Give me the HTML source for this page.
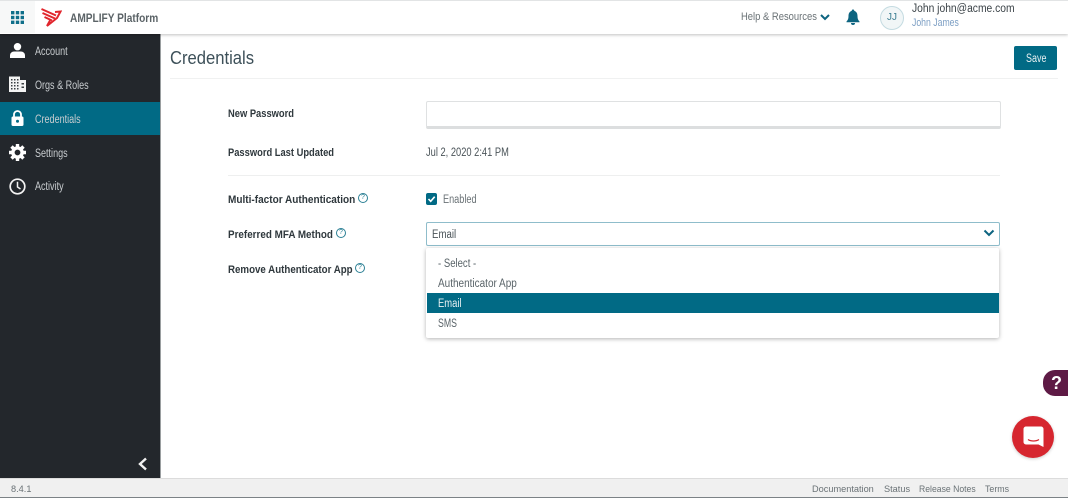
<!DOCTYPE html>
<html><head><meta charset="utf-8">
<style>
html,body{margin:0;padding:0;width:1068px;height:498px;overflow:hidden;background:#fff}
body{font-family:"Liberation Sans",sans-serif;position:relative;color:#3f4a50;filter:blur(.3px)}
.a{position:absolute;white-space:nowrap;line-height:1;transform-origin:0 50%}
.lbl{font-weight:bold;font-size:11px;color:#2f383d;left:228px}
.nav{left:35px;font-size:11.500px;color:#c9cdd0;transform:scaleX(.785)}
.q{position:absolute;width:8px;height:8px;border:1.100px solid #2c8095;border-radius:50%;font-size:7px;line-height:8px;text-align:center;color:#2c8095}
.opt{left:438px;font-size:11.500px;color:#5a6469}
.ft{top:485px;font-size:9.200px;color:#6a7276}
</style></head><body>
<!-- top bar -->
<div class="a" style="left:0;top:0;width:1068px;height:34px;background:#fff;box-shadow:0 1px 3px rgba(0,0,0,.25);z-index:3"></div>
<div class="a" style="left:0;top:0;width:35px;height:33px;background:#f7f8f8;z-index:3"></div>
<div class="a" style="left:0;top:0;width:1068px;height:1px;background:#e2e4e5;z-index:4"></div>
<svg class="a" style="left:11px;top:11px;z-index:4" width="13" height="13" viewBox="0 0 13 13" fill="#0f6f8a">
<rect x="0" y="0" width="3.400" height="3.400"/><rect x="4.800" y="0" width="3.400" height="3.400"/><rect x="9.600" y="0" width="3.400" height="3.400"/>
<rect x="0" y="4.800" width="3.400" height="3.400"/><rect x="4.800" y="4.800" width="3.400" height="3.400"/><rect x="9.600" y="4.800" width="3.400" height="3.400"/>
<rect x="0" y="9.600" width="3.400" height="3.400"/><rect x="4.800" y="9.600" width="3.400" height="3.400"/><rect x="9.600" y="9.600" width="3.400" height="3.400"/></svg>
<svg class="a" style="left:40px;top:7px;z-index:4" width="22" height="20" viewBox="0 0 22 20" fill="none" stroke="#e1262d" stroke-width="2">
<path d="M1.500 2L16 8.500M2.500 6L15 11.500M4.500 10L12 13.500"/><path d="M15 5L20.500 4.500L17 11L7 19L10 13.500"/></svg>
<div class="a" style="left:69.500px;top:11.500px;font-size:12px;font-weight:bold;color:#5b6367;z-index:4;transform:scaleX(.845)">AMPLIFY Platform</div>
<div class="a" style="left:741px;top:12px;font-size:11px;color:#6a7276;z-index:4;transform:scaleX(.857)">Help &amp; Resources</div>
<svg class="a" style="left:820px;top:14px;z-index:4" width="10" height="7" viewBox="0 0 10 7" fill="none" stroke="#0d6480" stroke-width="2"><path d="M1 1L5 5L9 1"/></svg>
<svg class="a" style="left:846px;top:9px;z-index:4" width="14" height="16" viewBox="0 0 14 16" fill="#0d6480"><path d="M7 0.500a1.200 1.200 0 0 1 1.200 1.400C10.500 2.500 11.500 4.500 11.500 7c0 3 .8 4.300 2 5.500v.8H.5v-.8c1.200-1.200 2-2.500 2-5.500 0-2.500 1-4.500 3.300-5.100A1.200 1.200 0 0 1 7 .5zM5 14h4a2 2 0 0 1-4 0z"/></svg>
<div class="a" style="left:880px;top:5.500px;width:24px;height:24px;border:1.500px solid #c4dbe1;border-radius:50%;background:#f1f6f7;box-sizing:border-box;z-index:4;text-align:center;font-size:10px;line-height:22px;color:#3b7e92">JJ</div>
<div class="a" style="left:912px;top:4px;font-size:11.500px;color:#3a4247;z-index:4;transform:scaleX(.895)">John john@acme.com</div>
<div class="a" style="left:912px;top:17.500px;font-size:10.800px;color:#7d9fc4;z-index:4;transform:scaleX(.805)">John James</div>

<!-- sidebar -->
<div class="a" style="left:0;top:34px;width:160px;height:444px;background:#23272c"></div>
<div class="a" style="left:160px;top:34px;width:1px;height:444px;background:#9a9ea0"></div>
<div class="a" style="left:0;top:102px;width:160px;height:33px;background:#016a85"></div>
<svg class="a" style="left:9px;top:43px" width="17" height="15" viewBox="0 0 17 15" fill="#fff"><circle cx="8.500" cy="3.700" r="3.700"/><path d="M1 15v-2.500C1 10 3 8.500 5 8.500h7c2 0 4 1.500 4 4V15z"/></svg>
<svg class="a" style="left:9px;top:76px" width="17" height="16" viewBox="0 0 17 16"><rect x="0" y="0.500" width="11" height="15.500" fill="#f3f3f3"/><rect x="11" y="4" width="6" height="12" fill="#f3f3f3"/><g fill="#3a3e42"><rect x="2" y="3" width="1.500" height="1.500"/><rect x="5" y="3" width="1.500" height="1.500"/><rect x="8" y="3" width="1.500" height="1.500"/><rect x="2" y="6" width="1.500" height="1.500"/><rect x="5" y="6" width="1.500" height="1.500"/><rect x="8" y="6" width="1.500" height="1.500"/><rect x="2" y="9" width="1.500" height="1.500"/><rect x="5" y="9" width="1.500" height="1.500"/><rect x="8" y="9" width="1.500" height="1.500"/><rect x="2" y="12" width="1.500" height="1.500"/><rect x="5" y="12" width="1.500" height="1.500"/><rect x="8" y="12" width="1.500" height="1.500"/><rect x="12.500" y="7" width="2.500" height="1.500"/><rect x="12.500" y="10.500" width="2.500" height="1.500"/></g></svg>
<svg class="a" style="left:11px;top:110px" width="13" height="16" viewBox="0 0 13 16"><path d="M3 7V4.500a3.500 3.500 0 0 1 7 0V7" fill="none" stroke="#fff" stroke-width="1.800"/><rect x="0.500" y="6.500" width="12" height="9.500" rx="1.500" fill="#fff"/><circle cx="6.500" cy="11.200" r="1.500" fill="#016a85"/></svg>
<svg class="a" style="left:9px;top:144px" width="17" height="17" viewBox="0 0 17 17"><circle cx="8.500" cy="8.500" r="4.600" fill="none" stroke="#fff" stroke-width="3.400"/><g stroke="#fff" stroke-width="3.400"><path d="M8.500 0v3M8.500 14v3M0 8.500h3M14 8.500h3M2.500 2.500l2 2M12.500 12.500l2 2M2.500 14.500l2-2M12.500 4.500l2-2"/></g></svg>
<svg class="a" style="left:9px;top:178px" width="17" height="17" viewBox="0 0 17 17" fill="none" stroke="#f3f3f3"><circle cx="8.500" cy="8.500" r="7.300" stroke-width="1.700"/><path d="M8.500 3.800V9l3 2" stroke-width="1.500"/></svg>
<div class="a nav" style="top:46.500px">Account</div>
<div class="a nav" style="top:80.500px">Orgs &amp; Roles</div>
<div class="a nav" style="top:114.500px">Credentials</div>
<div class="a nav" style="top:148.500px">Settings</div>
<div class="a nav" style="top:181.500px">Activity</div>
<svg class="a" style="left:137px;top:457px" width="11" height="14" viewBox="0 0 11 14" fill="none" stroke="#f2f2f2" stroke-width="2.400"><path d="M9 1.500L3 7L9 12.500"/></svg>

<!-- header -->
<div class="a" style="left:170px;top:49px;font-size:18px;color:#3d5059;transform:scaleX(.923)">Credentials</div>
<div class="a" style="left:170px;top:78px;width:888px;height:1px;background:#f0f1f1"></div>
<div class="a" style="left:1014px;top:46px;width:43px;height:24px;background:#016a85;border-radius:2px"></div>
<div class="a" style="left:1026px;top:53.500px;color:#e8f0f2;font-size:11.500px;transform:scaleX(.78)">Save</div>

<!-- form -->
<div class="a lbl" style="top:108.500px;transform:scaleX(.85)">New Password</div>
<div class="a" style="left:426px;top:101px;width:575px;height:28px;box-sizing:border-box;border:1px solid #dfe1e2;border-bottom:3.500px solid #dcdedf;border-radius:2px;background:#fff"></div>
<div class="a lbl" style="top:147.500px;transform:scaleX(.85)">Password Last Updated</div>
<div class="a" style="left:426px;top:147.500px;font-size:11.500px;color:#4a5358;transform:scaleX(.81)">Jul 2, 2020 2:41 PM</div>
<div class="a" style="left:228px;top:175px;width:772px;height:1px;background:#eeefef"></div>

<div class="a lbl" style="top:194.500px;transform:scaleX(.912)">Multi-factor Authentication</div>
<div class="q a" style="left:358px;top:193px">?</div>
<div class="a" style="left:426px;top:193px;width:11px;height:12px;background:#016a85;border-radius:2px"></div>
<svg class="a" style="left:426px;top:193px" width="11" height="12" viewBox="0 0 11 12" fill="none" stroke="#fff" stroke-width="1.600"><path d="M2.500 6L4.700 8.300L8.700 3.700"/></svg>
<div class="a" style="left:443px;top:194.500px;font-size:11.500px;color:#6a7276;transform:scaleX(.795)">Enabled</div>

<div class="a lbl" style="top:229.500px;transform:scaleX(.897)">Preferred MFA Method</div>
<div class="q a" style="left:336px;top:228px">?</div>
<div class="a" style="left:426px;top:222px;width:574px;height:24px;box-sizing:border-box;border:1px solid #8fbdcb;border-radius:2px;background:#fff"></div>
<div class="a" style="left:432px;top:229.500px;font-size:11.500px;color:#4a5358;transform:scaleX(.84)">Email</div>
<svg class="a" style="left:983px;top:229px" width="12" height="9" viewBox="0 0 12 9" fill="none" stroke="#0d6480" stroke-width="2"><path d="M1.500 1.500L6 6L10.500 1.500"/></svg>

<div class="a lbl" style="top:264.500px;transform:scaleX(.884)">Remove Authenticator App</div>
<div class="q a" style="left:355px;top:263px">?</div>

<!-- dropdown -->
<div class="a" style="left:426px;top:248px;width:573px;height:90px;background:#fff;box-shadow:0 1px 4px rgba(0,0,0,.3);border-radius:2px"></div>
<div class="a" style="left:427px;top:293px;width:572px;height:20px;background:#016a85"></div>
<div class="a opt" style="top:259px;transform:scaleX(.83)">- Select -</div>
<div class="a opt" style="top:279px;transform:scaleX(.868)">Authenticator App</div>
<div class="a opt" style="top:298.500px;color:#e8f0f2;transform:scaleX(.82)">Email</div>
<div class="a opt" style="top:318.500px;transform:scaleX(.76)">SMS</div>

<!-- help + chat -->
<div class="a" style="left:1043px;top:370px;width:30px;height:26px;background:#5e1a45;border-radius:12px 0 0 12px;color:#fff;font-weight:bold;font-size:18px;line-height:26px;text-indent:8px">?</div>
<div class="a" style="left:1012px;top:416px;width:42px;height:42px;border-radius:50%;background:#d6262f;box-shadow:0 1px 3px rgba(0,0,0,.2)"></div>
<svg class="a" style="left:1023px;top:426px" width="21" height="22" viewBox="0 0 21 22"><path d="M3 0.500h15a2.500 2.500 0 0 1 2.500 2.500v18l-5-2.500H3A2.500 2.500 0 0 1 .5 16V3A2.500 2.500 0 0 1 3 .5z" fill="#fff"/><path d="M5 13.500c3 2 8 2 11 0" fill="none" stroke="#d6262f" stroke-width="1.200"/></svg>

<!-- footer -->
<div class="a" style="left:0;top:478px;width:1068px;height:20px;background:#f0f0f0;border-top:1px solid #dcdcdc;box-sizing:border-box"></div>
<div class="a" style="left:0;top:497px;width:1068px;height:1px;background:#7c8286"></div>
<div class="a ft" style="left:11px">8.4.1</div>
<div class="a ft" style="left:812px">Documentation</div>
<div class="a ft" style="left:884px">Status</div>
<div class="a ft" style="left:919px;transform:scaleX(.94)">Release Notes</div>
<div class="a ft" style="left:985px;transform:scaleX(.96)">Terms</div>
</body></html>
